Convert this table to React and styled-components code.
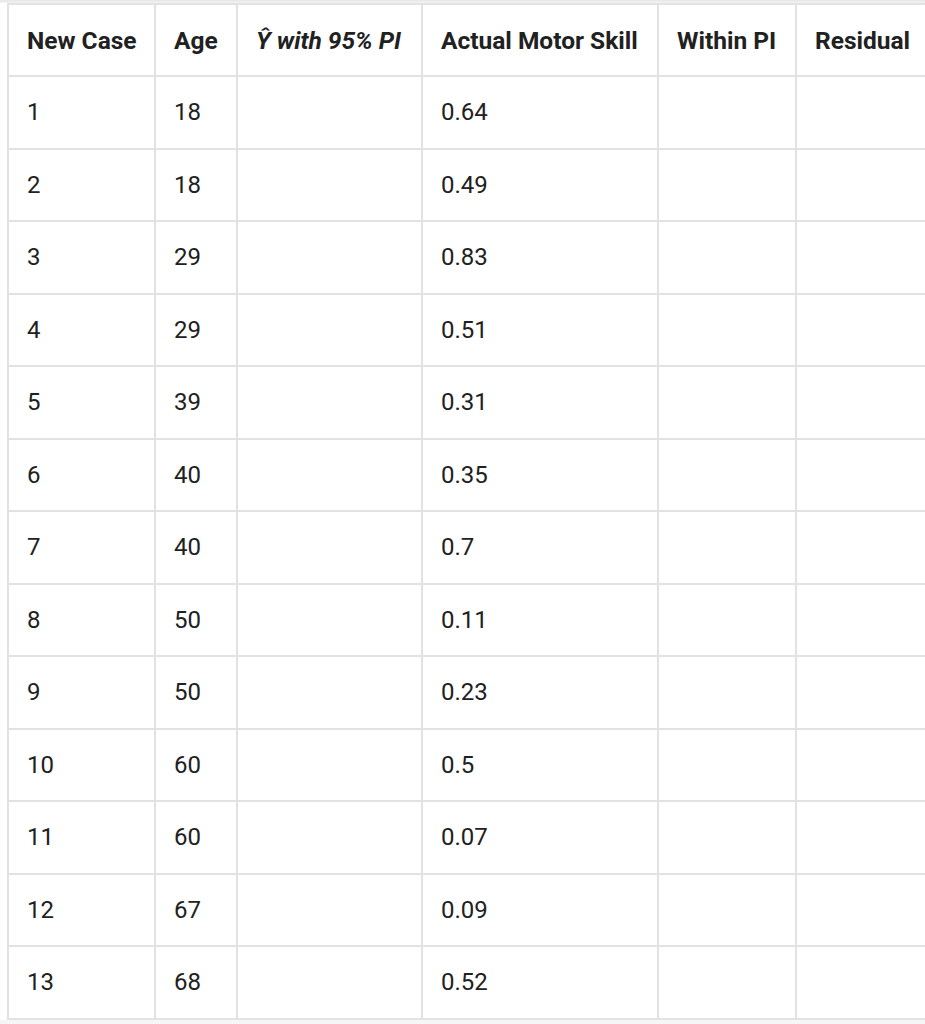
import styled, { createGlobalStyle } from 'styled-components';

const rows = [
  [1, 18, 0.64],
  [2, 18, 0.49],
  [3, 29, 0.83],
  [4, 29, 0.51],
  [5, 39, 0.31],
  [6, 40, 0.35],
  [7, 40, 0.7],
  [8, 50, 0.11],
  [9, 50, 0.23],
  [10, 60, 0.5],
  [11, 60, 0.07],
  [12, 67, 0.09],
  [13, 68, 0.52],
];

export default function App(){
    return(
        <PAGE>
            <Global/>
            <TOPSHADE/>
            <GRID>
                <HEAD>New Case</HEAD>
                <HEAD>Age</HEAD>
                <HEAD $i>Ŷ with 95% PI</HEAD>
                <HEAD>Actual Motor Skill</HEAD>
                <HEAD>Within PI</HEAD>
                <HEAD>Residual</HEAD>
                {rows.map(([n, age, skill], i) => (
                    [n, age, '', skill, '', ''].map((v, j) => (
                        <CELL key={i + '-' + j}>{v}</CELL>
                    ))
                ))}
            </GRID>
            <BOTTOM/>
        </PAGE>
    );
}

const Global = createGlobalStyle`
    html, body {
        margin: 0;
        padding: 0;
        background: #ffffff;
        overflow: hidden;
    }
`;

const PAGE = styled.div`
    display: flex;
    flex-direction: column;
    width: 925px;
    height: 1024px;
    overflow: hidden;
    font-family: Roboto, "Liberation Sans", sans-serif;
    color: #212121;
`;

const TOPSHADE = styled.div`
    height: 3px;
    flex-shrink: 0;
    background: linear-gradient(#e6e6e6, #f3f3f3);
`;

const GRID = styled.div`
    display: grid;
    grid-template-columns: 147px 82px 185px 236px 138px 150px;
    grid-template-rows: 72px;
    grid-auto-rows: 72.5px;
    width: max-content;
    margin-left: 7px;
    border-left: 2px solid #e2e2e2;
    border-top: 2px solid #e2e2e2;
    background: #ffffff;
`;

const CELL = styled.div`
    display: flex;
    align-items: center;
    padding-left: 18px;
    border-right: 2px solid #e2e2e2;
    border-bottom: 2px solid #e2e2e2;
    font-size: 24px;
    white-space: nowrap;
`;

const HEAD = styled(CELL)`
    font-size: 24.5px;
    font-weight: 700;
    font-style: ${props => props.$i ? "italic" : "normal"};
`;

const BOTTOM = styled.div`
    flex: 1;
    background: #f6f6f6;
`;
